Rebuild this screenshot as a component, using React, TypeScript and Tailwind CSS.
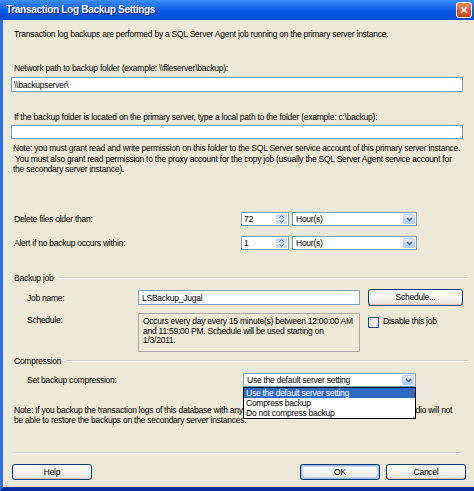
import React from 'react';

const SpinArrows = () => (
  <div className="mr-px flex w-[11px] flex-col gap-px self-stretch py-px">
    <div className="flex flex-1 items-center justify-center rounded-[1px] bg-[#c9d8f9]">
      <svg width="5" height="3" viewBox="0 0 5 3">
        <path d="M0.5 2.7 L2.5 0.7 L4.5 2.7" fill="none" stroke="#4d6185" strokeWidth="1" />
      </svg>
    </div>
    <div className="flex flex-1 items-center justify-center rounded-[1px] bg-[#c9d8f9]">
      <svg width="5" height="3" viewBox="0 0 5 3">
        <path d="M0.5 0.3 L2.5 2.3 L4.5 0.3" fill="none" stroke="#4d6185" strokeWidth="1" />
      </svg>
    </div>
  </div>
);

const ComboArrow = () => (
  <div className="m-px flex w-[12px] items-center justify-center self-stretch rounded-[2px] border border-[#b9cdf6] bg-linear-to-b from-[#e2eafc] to-[#b4c8f4]">
    <svg width="7" height="5" viewBox="0 0 7 5">
      <path d="M1 1 L3.5 3.5 L6 1" fill="none" stroke="#4d6185" strokeWidth="1.5" />
    </svg>
  </div>
);

const Spinner = ({ value }: { value: string }) => (
  <div className="flex h-full w-[48px] items-center border border-[#7f9db9] bg-white pl-[2px]">
    <span className="flex-1">{value}</span>
    <SpinArrows />
  </div>
);

const Combo = ({ value, width }: { value: string; width: string }) => (
  <div className={`flex h-full items-center border border-[#7f9db9] bg-white pl-[3px] ${width}`}>
    <span className="flex-1 whitespace-nowrap">{value}</span>
    <ComboArrow />
  </div>
);

const XpButton = ({ label, isDefault = false, className = '' }: { label: string; isDefault?: boolean; className?: string }) => (
  <button
    className={`flex items-center justify-center rounded-[3px] border border-[#003c74] bg-linear-to-b from-[#ffffff] via-[#f6f5f1] to-[#e3e2da] text-[8.5px] leading-none tracking-[-0.25px] text-black ${
      isDefault ? 'shadow-[inset_0_0_0_1px_#98b8ee,inset_0_0_0_2px_#c8daf8]' : 'shadow-[inset_0_-1px_0_#d6d0c5]'
    } ${className}`}
  >
    {label}
  </button>
);

const GroupHeader = ({ label, className }: { label: string; className: string }) => (
  <div className={`-mr-[5px] ml-[3px] flex h-[10px] items-center ${className}`}>
    <span>{label}</span>
    <div className="ml-[5px] h-[2px] flex-1 border-t border-b border-t-[#d0d0bf] border-b-white" />
  </div>
);

export default function App() {
  return (
    <div className="flex h-[491px] w-[474px] flex-col overflow-hidden bg-[#ece9d8] font-['Liberation_Sans',Arial,sans-serif] text-[8.5px] leading-[10px] tracking-[-0.25px] text-black">
      {/* Title bar */}
      <div className="flex h-[20px] shrink-0 items-center justify-between bg-linear-to-b from-[#3d8ef9] via-[#0a5de8] to-[#0049d2] pl-[6px] pr-[2px]">
        <span className="text-[10px] font-bold tracking-[-0.3px] text-white [text-shadow:1px_1px_0_#0a2470]">
          Transaction Log Backup Settings
        </span>
        <div className="flex h-[16px] w-[16px] items-center justify-center rounded-[3px] border border-white bg-linear-to-b from-[#ec8a6a] via-[#dc5a33] to-[#c2431c]">
          <svg width="8" height="8" viewBox="0 0 8 8">
            <path d="M1 1 L7 7 M7 1 L1 7" stroke="white" strokeWidth="1.6" />
          </svg>
        </div>
      </div>

      {/* Body */}
      <div className="flex min-h-0 flex-1 flex-col border-b-[4px] border-l-[3px] border-b-[#0b2a9a] border-l-[#2f6fe2] pl-[8px] pr-[11px]">
        <p className="ml-[3px] mt-[9px] h-[10px] whitespace-nowrap">
          Transaction log backups are performed by a SQL Server Agent job running on the primary server instance.
        </p>

        <p className="ml-[3px] mt-[24px] h-[10px] whitespace-nowrap">
          Network path to backup folder (example: \\fileserver\backup):
        </p>
        <div className="mt-[4px] flex h-[15px] w-[452px] items-center border border-[#7f9db9] bg-white pl-[2px]">
          \\backupserver\
        </div>

        <p className="ml-[3px] mt-[20px] h-[10px] whitespace-nowrap">
          If the backup folder is located on the primary server, type a local path to the folder (example: c:\backup):
        </p>
        <div className="mt-[3px] h-[14px] w-[452px] border border-[#7f9db9] bg-white" />

        <p className="ml-[2px] mt-[4px] h-[31px] whitespace-nowrap leading-[10.5px]">
          Note: you must grant read and write permission on this folder to the SQL Server service account of this primary server instance.
          <br />
          &nbsp;You must also grant read permission to the proxy account for the copy job (usually the SQL Server Agent service account for
          <br />
          the secondary server instance).
        </p>

        {/* Retention rows */}
        <div className="mt-[38px] flex h-[14px] items-center">
          <span className="ml-[3px] w-[227px]">Delete files older than:</span>
          <Spinner value="72" />
          <div className="ml-[3px] h-full">
            <Combo value="Hour(s)" width="w-[125px]" />
          </div>
        </div>
        <div className="mt-[10px] flex h-[14px] items-center">
          <span className="ml-[3px] w-[227px]">Alert if no backup occurs within:</span>
          <Spinner value="1" />
          <div className="ml-[3px] h-full">
            <Combo value="Hour(s)" width="w-[125px]" />
          </div>
        </div>

        {/* Backup job */}
        <GroupHeader label="Backup job" className="mt-[23px]" />
        <div className="mt-[6px] flex h-[17px] items-center">
          <span className="ml-[16px] w-[111px]">Job name:</span>
          <div className="flex h-[15px] w-[222px] items-center border border-[#7f9db9] bg-white pl-[3px]">LSBackup_Jugal</div>
          <XpButton label="Schedule..." className="ml-[8px] h-[17px] w-[95px]" />
        </div>
        <div className="mt-[7px] flex h-[39px] items-start">
          <span className="ml-[16px] mt-[2px] w-[111px]">Schedule:</span>
          <div className="h-[39px] w-[222px] whitespace-nowrap border border-[#a7a6aa] px-[4px] pt-[3px] leading-[9.7px]">
            Occurs every day every 15 minute(s) between 12:00:00 AM
            <br />
            and 11:59:00 PM. Schedule will be used starting on
            <br />
            1/3/2011.
          </div>
          <div className="ml-[8px] mt-[4px] h-[11px] w-[11px] border border-[#1c5180] bg-linear-to-br from-[#dcdcd7] to-white" />
          <span className="ml-[4px] mt-[3px]">Disable this job</span>
        </div>

        {/* Compression */}
        <GroupHeader label="Compression" className="mt-[4px]" />
        <div className="mt-[7px] flex h-[14px] items-center">
          <span className="ml-[16px] w-[216px]">Set backup compression:</span>
          <div className="relative h-full">
            <Combo value="Use the default server setting" width="w-[173px]" />
            <div className="absolute left-0 top-full z-10 w-[173px] border border-black bg-white">
              <div className="h-[10px] bg-[#316ac5] pl-[2px] leading-[10px] text-white">Use the default server setting</div>
              <div className="h-[10px] pl-[2px] leading-[10px]">Compress backup</div>
              <div className="h-[10px] pl-[2px] leading-[10px]">Do not compress backup</div>
            </div>
          </div>
        </div>

        <p className="ml-[3px] mt-[18px] h-[20px] whitespace-nowrap">
          Note: If you backup the transaction logs of this database with any other job or maintenance plan, Management Studio will not
          <br />
          be able to restore the backups on the secondary server instances.
        </p>

        <div className="ml-px mt-[27px] h-[2px] w-[450px] border-t border-b border-t-[#d0d0bf] border-b-white" />

        <div className="-mr-[3px] ml-px mt-[10px] flex h-[16px] items-center">
          <XpButton label="Help" className="h-[16px] w-[80px]" />
          <XpButton label="OK" isDefault className="ml-auto h-[16px] w-[80px]" />
          <XpButton label="Cancel" className="ml-[6px] h-[16px] w-[80px]" />
        </div>
      </div>
    </div>
  );
}
